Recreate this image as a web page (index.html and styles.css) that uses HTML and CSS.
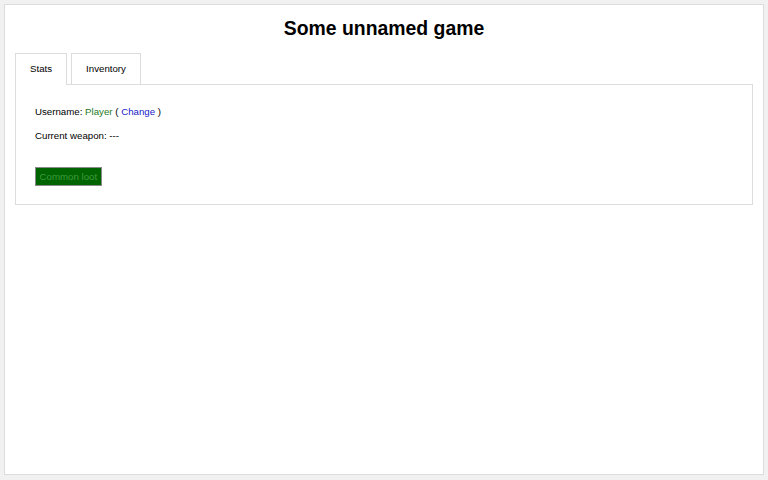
FILE: index.html
```html
<!DOCTYPE html>
<html>
<head>
<meta charset="utf-8">
<link rel="stylesheet" href="styles.css">
</head>
<body>
<div class="app">
  <h1 class="title">Some unnamed game</h1>
  <div class="tabs">
    <div class="tab active">Stats</div>
    <div class="tab">Inventory</div>
  </div>
  <div class="panel">
    <p class="line">Username: <span class="player">Player</span> ( <a class="change" href="#">Change</a> )</p>
    <p class="line">Current weapon: ---</p>
    <button class="loot">Common loot</button>
  </div>
</div>
</body>
</html>
```
FILE: styles.css
```css
html, body {
  margin: 0;
  padding: 0;
}
body {
  background: #f1f1f1;
  padding: 4px;
  font-family: "Liberation Sans", Arial, sans-serif;
  color: #000;
}
.app {
  box-sizing: border-box;
  height: 471px;
  background: #fff;
  border: 1px solid #dcdcdc;
  padding: 10px;
}
.title {
  margin: 2px 0 0;
  font-size: 19.4px;
  line-height: 23px;
  text-align: center;
  font-weight: bold;
}
.tabs {
  display: flex;
  gap: 4px;
  margin-top: 13px;
  position: relative;
  z-index: 1;
}
.tab {
  box-sizing: border-box;
  height: 32px;
  line-height: 30px;
  padding: 0 14px;
  font-size: 9.7px;
  border: 1px solid #dcdcdc;
  border-bottom: none;
  background: #fff;
}
.tabs .tab:not(.active) {
  height: 31px;
}
.panel {
  border: 1px solid #dcdcdc;
  margin-top: -1px;
  padding: 21px 19px 18px;
}
.line {
  margin: 0 0 12px;
  font-size: 9.7px;
  line-height: 12px;
}
.player {
  color: #1e7a1e;
}
.change {
  color: #2020c8;
  text-decoration: none;
}
.loot {
  display: block;
  margin-top: 25px;
  height: 19px;
  padding: 0 3.5px;
  background: #006400;
  color: #3f9a3f;
  border: 1px solid #8a8a8a;
  font-family: "Liberation Sans", Arial, sans-serif;
  font-size: 9.7px;
  line-height: 17px;
}
```
